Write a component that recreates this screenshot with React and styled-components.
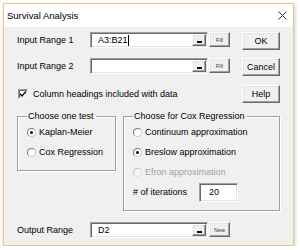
import React from "react";
import styled, { createGlobalStyle } from "styled-components";

const GlobalStyle = createGlobalStyle`
  html, body { margin: 0; padding: 0; background: #ffffff; }
  body { font-family: "Liberation Sans", Arial, sans-serif; }
`;

const Window = styled.div`
  box-sizing: border-box;
  margin: 3px 0 0 3px;
  width: 291px;
  height: 243px;
  border: 1px solid #e9c88e;
  box-shadow: 1px 2px 4px rgba(0, 0, 0, 0.22);
  display: flex;
  flex-direction: column;
  background: #f0f0f0;
`;

const TitleBar = styled.div`
  box-sizing: border-box;
  flex: none;
  height: 23px;
  background: #ffffff;
  display: flex;
  align-items: center;
  justify-content: space-between;
  padding: 0 6px 0 3px;
`;

const Title = styled.span`
  font-size: 9.5px;
  color: #000;
`;

const CloseIcon = styled.svg`
  width: 9px;
  height: 9px;
  display: block;
`;

const Content = styled.div`
  flex: 1;
  display: flex;
  flex-direction: column;
  padding: 5px 13px 0 13px;
  font-size: 9px;
  color: #000;
`;

const Row = styled.div`
  display: flex;
  align-items: ${(p) => (p.$center ? "center" : "flex-start")};
  margin-top: ${(p) => p.$mt || 0}px;
  height: ${(p) => p.$h || 18}px;
`;

const Label = styled.span`
  flex: none;
  width: 73px;
  line-height: 16px;
`;

const Sunken = styled.div`
  box-sizing: border-box;
  flex: none;
  background: #ffffff;
  border: 1px solid;
  border-color: #a0a0a0 #ffffff #ffffff #a0a0a0;
  box-shadow: inset 1px 1px 0 #696969, inset -1px -1px 0 #e3e3e3;
  display: flex;
  align-items: center;
`;

const Field = styled(Sunken)`
  width: 118px;
  height: 16px;
`;

const FieldText = styled.span`
  flex: 1;
  display: flex;
  align-items: center;
  padding-left: 7px;
  line-height: 12px;
`;

const Caret = styled.span`
  display: inline-block;
  width: 1px;
  height: 11px;
  background: #000;
  margin-left: 0.5px;
`;

const raised = `
  box-sizing: border-box;
  background: #f0f0f0;
  border: 1px solid;
  border-color: #ffffff #696969 #696969 #ffffff;
  box-shadow: inset -1px -1px 0 #a0a0a0, inset 1px 1px 0 #e3e3e3;
`;

const PickButton = styled.span`
  ${raised}
  flex: none;
  width: 14px;
  height: 12px;
  margin-right: 1px;
  display: flex;
  align-items: flex-end;
  justify-content: center;
  padding-bottom: 2px;
  &::after {
    content: "";
    display: block;
    width: 5px;
    height: 2px;
    background: #111;
  }
`;

const SmallButton = styled.span`
  ${raised}
  flex: none;
  width: 21px;
  height: 15px;
  margin-left: 1px;
  display: flex;
  align-items: center;
  justify-content: center;
  font-size: 5.5px;
  color: #333;
`;

const DialogButton = styled.span`
  ${raised}
  flex: none;
  width: 38px;
  height: 18px;
  margin-left: auto;
  display: flex;
  align-items: center;
  justify-content: center;
  font-size: 9px;
`;

const CheckBox = styled(Sunken)`
  width: 10px;
  height: 10px;
  margin-left: 1px;
  justify-content: center;
`;

const CheckText = styled.span`
  margin-left: 5px;
`;

const Groups = styled.div`
  display: flex;
  align-items: flex-start;
  gap: 7px;
  margin-top: 7px;
`;

const Group = styled.fieldset`
  box-sizing: border-box;
  margin: 0;
  min-width: 0;
  width: ${(p) => p.$w}px;
  height: ${(p) => p.$h}px;
  padding: 0 0 0 9px;
  border: 1px solid #a0a0a0;
  box-shadow: inset 1px 1px 0 #ffffff, 1px 1px 0 #ffffff;
  display: flex;
  flex-direction: column;
`;

const Legend = styled.legend`
  font-size: 9px;
  line-height: 12px;
  padding: 0 2px 0 1px;
  background: #f0f0f0;
`;

const Option = styled.div`
  display: flex;
  align-items: center;
  height: 20px;
  color: ${(p) => (p.$disabled ? "#a0a0a0" : "#000")};
`;

const Radio = styled.span`
  box-sizing: border-box;
  flex: none;
  width: 9px;
  height: 9px;
  border-radius: 50%;
  background: ${(p) => (p.$disabled ? "#f4f4f4" : "#fff")};
  border: 1px solid ${(p) => (p.$disabled ? "#c8c8c8" : "#7a7a7a")};
  border-bottom-color: ${(p) => (p.$disabled ? "#e0e0e0" : "#c8c8c8")};
  border-right-color: ${(p) => (p.$disabled ? "#e0e0e0" : "#c8c8c8")};
  margin-right: 3px;
  display: flex;
  align-items: center;
  justify-content: center;
  &::after {
    content: "";
    display: ${(p) => (p.$checked ? "block" : "none")};
    width: 3px;
    height: 3px;
    border-radius: 50%;
    background: #000;
  }
`;

const IterLabel = styled.span`
  flex: none;
  width: 66px;
`;

const IterBox = styled(Sunken)`
  width: 39px;
  height: 19px;
  padding-left: 9px;
`;

function LabeledField({ label, value, caret, side }) {
  return (
    <>
      <Label>{label}</Label>
      <Field>
        <FieldText>
          {value}
          {caret && <Caret />}
        </FieldText>
        <PickButton />
      </Field>
      <SmallButton>{side}</SmallButton>
    </>
  );
}

export default function App() {
  return (
    <>
      <GlobalStyle />
      <Window>
        <TitleBar>
          <Title>Survival Analysis</Title>
          <CloseIcon viewBox="0 0 9 9">
            <path d="M0.5 0.5 L8.5 8.5 M8.5 0.5 L0.5 8.5" stroke="#333" strokeWidth="1" />
          </CloseIcon>
        </TitleBar>
        <Content>
          <Row>
            <LabeledField label="Input Range 1" value="A3:B21" caret side="Fill" />
            <DialogButton>OK</DialogButton>
          </Row>
          <Row $mt={8}>
            <LabeledField label="Input Range 2" value="" side="Fill" />
            <DialogButton>Cancel</DialogButton>
          </Row>
          <Row $mt={9} $center>
            <CheckBox>
              <svg width="8" height="8" viewBox="0 0 8 8">
                <path d="M1 3.8 L3 6 L7 1.5" fill="none" stroke="#111" strokeWidth="1.5" />
              </svg>
            </CheckBox>
            <CheckText>Column headings included with data</CheckText>
            <DialogButton>Help</DialogButton>
          </Row>
          <Groups>
            <Group $w={99} $h={61}>
              <Legend>Choose one test</Legend>
              <Option>
                <Radio $checked />
                Kaplan-Meier
              </Option>
              <Option>
                <Radio />
                Cox Regression
              </Option>
            </Group>
            <Group $w={157} $h={101}>
              <Legend>Choose for Cox Regression</Legend>
              <Option>
                <Radio />
                Continuum approximation
              </Option>
              <Option>
                <Radio $checked />
                Breslow approximation
              </Option>
              <Option $disabled>
                <Radio $disabled />
                Efron approximation
              </Option>
              <Option>
                <IterLabel># of iterations</IterLabel>
                <IterBox>20</IterBox>
              </Option>
            </Group>
          </Groups>
          <Row $mt={11} $h={16}>
            <LabeledField label="Output Range" value="D2" side="New" />
          </Row>
        </Content>
      </Window>
    </>
  );
}
